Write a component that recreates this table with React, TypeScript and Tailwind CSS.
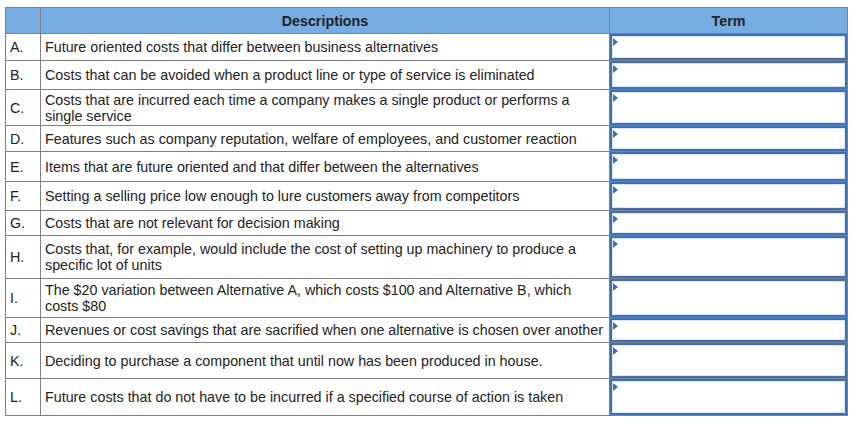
const rows = [
  { k: 'A.', text: 'Future oriented costs that differ between business alternatives', h: 'h-[26px]' },
  { k: 'B.', text: 'Costs that can be avoided when a product line or type of service is eliminated', h: 'h-[28px]' },
  { k: 'C.', text: 'Costs that are incurred each time a company makes a single product or performs a single service', h: 'h-[35px]' },
  { k: 'D.', text: 'Features such as company reputation, welfare of employees, and customer reaction', h: 'h-[25px]' },
  { k: 'E.', text: 'Items that are future oriented and that differ between the alternatives', h: 'h-[29px]' },
  { k: 'F.', text: 'Setting a selling price low enough to lure customers away from competitors', h: 'h-[28px]' },
  { k: 'G.', text: 'Costs that are not relevant for decision making', h: 'h-[24px]' },
  { k: 'H.', text: 'Costs that, for example, would include the cost of setting up machinery to produce a specific lot of units', h: 'h-[42px]' },
  { k: 'I.', text: 'The $20 variation between Alternative A, which costs $100 and Alternative B, which costs $80', h: 'h-[38px]' },
  { k: 'J.', text: 'Revenues or cost savings that are sacrified when one alternative is chosen over another', h: 'h-[24px]' },
  { k: 'K.', text: 'Deciding to purchase a component that until now has been produced in house.', h: 'h-[35px]' },
  { k: 'L.', text: 'Future costs that do not have to be incurred if a specified course of action is taken', h: 'h-[36px]' },
]

function TermBox({ h }: { h: string }) {
  return (
    <div className={`relative ${h} w-full border-2 border-[#3e70b5] bg-white`}>
      <div className="absolute inset-0 border border-[#dbe6f3]"></div>
      {/* dropdown marker */}
      <div className="absolute left-[1px] top-[2px] h-0 w-0 border-y-[4px] border-l-[5px] border-y-transparent border-l-[#3e70b5]"></div>
    </div>
  )
}

export default function App() {
  return (
    <div className="min-h-[433px] w-[868px] bg-white pl-[5px] pt-[7px] font-['Liberation_Sans',Arial,sans-serif] text-[14.3px] leading-[16px] text-[#222]">
      <table className="w-[842px] table-fixed border-collapse border border-[#808080]">
        <colgroup>
          <col className="w-[35px]" />
          <col className="w-[569px]" />
          <col className="w-[238px]" />
        </colgroup>
        <thead>
          <tr className="h-[26px] bg-[#78ade4]">
            <th className="border border-[#808080]"></th>
            <th className="border border-[#808080] font-bold">Descriptions</th>
            <th className="border border-[#808080] font-bold">Term</th>
          </tr>
        </thead>
        <tbody>
          {rows.map((r) => (
            <tr key={r.k}>
              <td className="border border-[#808080] pl-[4px] align-middle">{r.k}</td>
              <td className="border border-[#808080] pl-[4px] pr-[2px] align-middle">{r.text}</td>
              <td className="border border-[#808080] p-0 align-top">
                <TermBox h={r.h} />
              </td>
            </tr>
          ))}
        </tbody>
      </table>
    </div>
  )
}
